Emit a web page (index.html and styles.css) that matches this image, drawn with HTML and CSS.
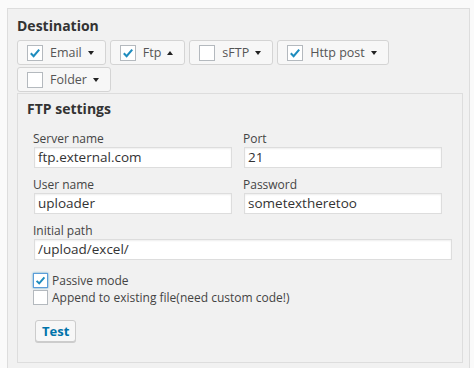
FILE: index.html
```html
<!DOCTYPE html>
<html lang="en">
<head>
  <meta charset="UTF-8" />
  <title>Destination settings</title>
  <link rel="stylesheet" href="styles.css">
</head>
<body>

  <div class="panel">
    <h3>Destination</h3>

    <div class="tabs">
      <div class="tab">
        <span class="check on"><svg viewBox="0 0 16 16"><path d="M3.2 8.4 L6.4 11.6 L12.8 4.2" /></svg></span>
        Email <span class="caret"></span>
      </div>
      <div class="tab">
        <span class="check on"><svg viewBox="0 0 16 16"><path d="M3.2 8.4 L6.4 11.6 L12.8 4.2" /></svg></span>
        Ftp <span class="caret up"></span>
      </div>
      <div class="tab">
        <span class="check"></span>
        sFTP <span class="caret"></span>
      </div>
      <div class="tab">
        <span class="check on"><svg viewBox="0 0 16 16"><path d="M3.2 8.4 L6.4 11.6 L12.8 4.2" /></svg></span>
        Http post <span class="caret"></span>
      </div>
      <div class="tab">
        <span class="check"></span>
        Folder <span class="caret"></span>
      </div>
    </div>

    <div class="settings">
      <h3>FTP settings</h3>

      <div class="fields">
        <div class="row">
          <div class="field">
            <label>Server name</label>
            <div class="input">ftp.external.com</div>
          </div>
          <div class="field">
            <label>Port</label>
            <div class="input">21</div>
          </div>
        </div>
        <div class="row">
          <div class="field">
            <label>User name</label>
            <div class="input">uploader</div>
          </div>
          <div class="field">
            <label>Password</label>
            <div class="input">sometextheretoo</div>
          </div>
        </div>
        <div class="field wide">
          <label>Initial path</label>
          <div class="input">/upload/excel/</div>
        </div>

        <div class="opts">
          <div class="opt">
            <span class="check small focus"><svg viewBox="0 0 16 16"><path d="M3.2 8.4 L6.4 11.6 L12.8 4.2" /></svg></span>
            Passive mode
          </div>
          <div class="opt">
            <span class="check small"></span>
            Append to existing file(need custom code!)
          </div>
        </div>

        <button class="btn">Test</button>
      </div>
    </div>
  </div>

</body>
</html>
```

FILE: styles.css
```css
body {
  margin: 0;
  font-family: 'Open Sans', sans-serif;
  font-size: 13px;
  color: #444;
  background: #fafafa;
  overflow: hidden;
}
.panel {
  margin: 8px 4px 0 7px;
  height: 360px;
  box-sizing: border-box;
  border: 1px solid #ddd;
  border-bottom: none;
  background: #f1f1f1;
  padding: 7px 6px 0 9px;
}
h3 {
  margin: 0;
  font-size: 14px;
  line-height: 20px;
  color: #333;
}
.tabs {
  margin-top: 4px;
  display: flex;
  flex-wrap: wrap;
  gap: 2px 4px;
  width: 390px;
}
.tab {
  height: 25px;
  box-sizing: border-box;
  display: flex;
  align-items: center;
  padding: 0 11px 0 9px;
  background: #f7f7f7;
  border: 1px solid #d4d4d4;
  border-radius: 3px;
  font-size: 12.5px;
  color: #555;
}
.check {
  width: 16px;
  height: 16px;
  box-sizing: border-box;
  background: #fff;
  border: 1px solid #b4b9be;
  margin-right: 7px;
  display: inline-flex;
}
.check svg {
  width: 100%;
  height: 100%;
}
.check path {
  fill: none;
  stroke: #1e8cbe;
  stroke-width: 2.4;
}
.caret {
  margin-left: 6px;
  width: 0;
  height: 0;
  border-left: 3.5px solid transparent;
  border-right: 3.5px solid transparent;
  border-top: 4px solid #222;
}
.caret.up {
  border-top: none;
  border-bottom: 4px solid #222;
}
.settings {
  margin-top: 1px;
  border: 1px solid #ddd;
  padding: 5px 9px 20px 9px;
}
.fields {
  padding-left: 6px;
  margin-top: 11px;
}
.row {
  display: flex;
  gap: 11px;
  margin-bottom: 8px;
}
.field {
  width: 199px;
}
.field.wide {
  width: 419px;
}
label {
  display: block;
  line-height: 17px;
  font-size: 12px;
  color: #444;
}
.input {
  margin-left: 1px;
  height: 21px;
  box-sizing: border-box;
  background: #fff;
  border: 1px solid #ddd;
  box-shadow: inset 0 1px 2px rgba(0,0,0,0.07);
  padding: 0 3px;
  font-size: 13.5px;
  line-height: 19px;
  color: #333;
}
.opts {
  margin-top: 12px;
}
.opt {
  display: flex;
  align-items: center;
  height: 17px;
  font-size: 12px;
  color: #444;
}
.check.small {
  width: 15px;
  height: 15px;
  margin-right: 4px;
}
.check.focus {
  border-color: #5b9dd9;
  box-shadow: 0 0 2px rgba(30,140,190,0.8);
}
.btn {
  margin: 14px 0 0 2px;
  height: 22px;
  padding: 0 6px;
  background: #f7f7f7;
  border: 1px solid #ccc;
  border-radius: 3px;
  box-shadow: 0 1px 0 #ccc;
  font-family: 'Open Sans', sans-serif;
  font-size: 13px;
  font-weight: bold;
  color: #0073aa;
}
```
